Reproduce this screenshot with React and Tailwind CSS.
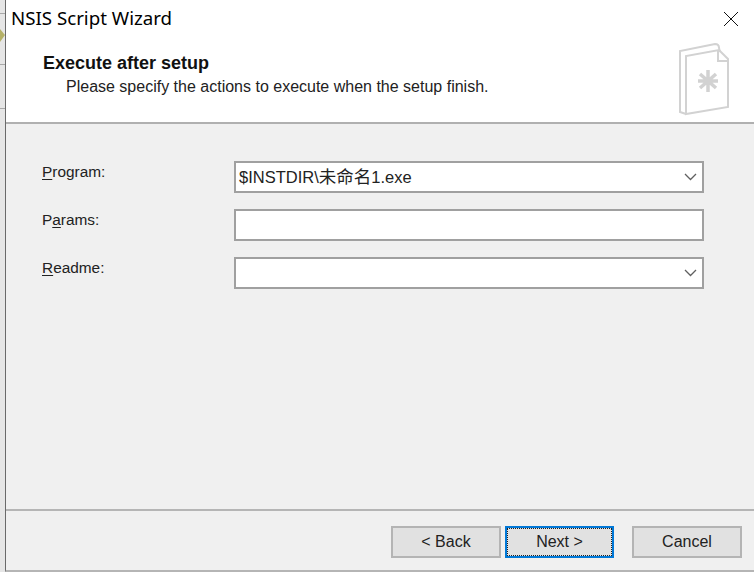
function Chevron() {
  return (
    <svg width="13" height="8" viewBox="0 0 13 8" className="shrink-0" fill="none" stroke="#606060" strokeWidth="1.3">
      <path d="M1 1 L6.5 6.5 L12 1" />
    </svg>
  );
}

function Field({ label, u, rest, prefix = "", value = null, combo = false }) {
  return (
    <div className="flex h-[32px] items-start">
      <div className="w-[228px] shrink-0 pl-[36px] pt-[1px] text-[15.4px] leading-[20px] text-[#222]">
        {prefix}
        <span className="underline underline-offset-2">{u}</span>
        {rest}
      </div>
      <div className="flex h-[32px] w-[470px] shrink-0 items-center justify-between border-2 border-[#a0a0a0] bg-white pl-[3px] pr-[5px] text-[16.5px] text-[#222]">
        <span className="leading-[20px]">{value}</span>
        {combo && <Chevron />}
      </div>
    </div>
  );
}

function Btn({ children, primary }) {
  return (
    <div
      className={
        primary
          ? "flex h-[32px] w-[109px] items-center justify-center border-2 border-[#0078d7] bg-[#e1e1e1] text-[16px] text-[#222] outline-1 -outline-offset-3 outline-dotted outline-[#222]"
          : "flex h-[32px] w-[110px] items-center justify-center border-2 border-[#b4b4b4] bg-[#e1e1e1] text-[16px] text-[#222]"
      }
    >
      {children}
    </div>
  );
}

export default function App() {
  return (
    <div className="flex h-[572px] w-[754px] overflow-hidden bg-[#f0f0f0] font-['Liberation_Sans','Noto_Sans_CJK_SC',sans-serif]">
      <div className="flex w-[5px] shrink-0 flex-col bg-[#e6e6e6]">
        <div className="mt-[13px] h-px bg-[#a8a8a8]" />
        <svg className="mt-[15px] shrink-0" width="5" height="13" viewBox="0 0 5 13">
          <path d="M0 0 L5 6 L0 13 Z" fill="#b5b168" />
        </svg>
        <div className="mt-[22px] h-px bg-[#a8a8a8]" />
        <div className="mt-[43px] h-px bg-[#a8a8a8]" />
      </div>
      <div className="flex min-w-0 flex-1 flex-col border-b-2 border-l border-b-[#b5b5b5] border-l-[#6a6a6a]">
        <div className="relative h-[124px] shrink-0 border-b-2 border-[#b0b0b0] bg-white">
          <div className="pl-[5px] pt-[6px] font-['Noto_Sans',sans-serif] text-[18.7px] leading-[24px] text-black">NSIS Script Wizard</div>
          <svg className="absolute right-[15px] top-[11px]" width="16" height="16" viewBox="0 0 16 16" stroke="#111" strokeWidth="1" fill="none">
            <path d="M1 1 L15 15 M15 1 L1 15" />
          </svg>
          <div className="pl-[37px] pt-[23px] text-[18px] font-bold leading-[20px] text-[#111]">Execute after setup</div>
          <div className="pl-[60px] pt-[4px] text-[16px] leading-[20px] text-[#222]">Please specify the actions to execute when the setup finish.</div>
          <svg className="absolute right-[24px] top-[42px]" width="52" height="76" viewBox="0 0 52 76" fill="none" stroke="#d2d2d2" strokeWidth="2">
            <path d="M8 72 L2 70 L2 9 L37 2 Q41 2 41 6 L42 10" />
            <path d="M8 72 L8 14 L41 8 L50 17 L50 65 Z" />
            <path d="M40 9 L40 19 L49 19" />
            <path d="M30 28 V50 M22 32 L38 46 M38 32 L22 46 M20 39 H40" strokeWidth="3.5" />
          </svg>
        </div>
        <div className="flex flex-col gap-[16px] pt-[37px]">
          <Field u="P" rest="rogram:" value={<>$INSTDIR\<span className="text-[17.5px]">未命名</span>1.exe</>} combo />
          <Field prefix="P" u="a" rest="rams:" />
          <Field u="R" rest="eadme:" combo />
        </div>
        <div className="flex-1" />
        <div className="flex h-[61px] shrink-0 items-start justify-end gap-[4px] border-t-2 border-[#b5b5b5] pr-[12px] pt-[15px]">
          <Btn>&lt; Back</Btn>
          <Btn primary>Next &gt;</Btn>
          <div className="w-[10px]" />
          <Btn>Cancel</Btn>
        </div>
      </div>
    </div>
  );
}
